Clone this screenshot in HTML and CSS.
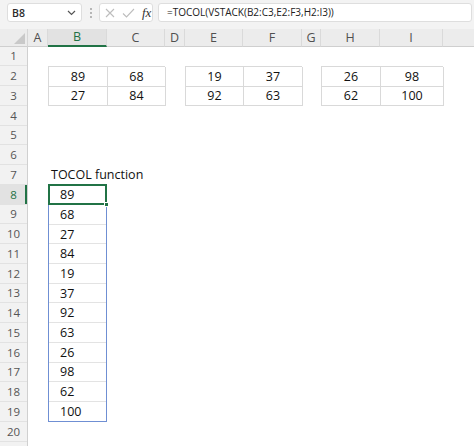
FILE: index.html
```html
<!DOCTYPE html>
<html>
<head>
<meta charset="utf-8">
<link rel="stylesheet" href="styles.css">
</head>
<body>
<div class="app">
  <div class="toolbar">
    <div class="namebox">
      <span class="ref">B8</span>
      <svg class="chev" width="9" height="6" viewBox="0 0 9 6"><polyline points="1,1 4.5,4.5 8,1" fill="none" stroke="#555" stroke-width="1.2"/></svg>
    </div>
    <svg class="grip" width="4" height="12" viewBox="0 0 4 12"><circle cx="2" cy="2" r="0.9" fill="#9a9a9a"/><circle cx="2" cy="6" r="0.9" fill="#9a9a9a"/><circle cx="2" cy="10" r="0.9" fill="#9a9a9a"/></svg>
    <div class="fnbox">
      <svg class="ico-x" width="10" height="10" viewBox="0 0 10 10"><path d="M1 1 L9 9 M9 1 L1 9" stroke="#bdbdbd" stroke-width="1.1" fill="none"/></svg>
      <svg class="ico-ok" width="13" height="10" viewBox="0 0 13 10"><polyline points="1,5.5 4.5,9 12,1" fill="none" stroke="#bdbdbd" stroke-width="1.1"/></svg>
      <span class="fx">fx</span>
    </div>
    <div class="formula">=TOCOL(VSTACK(B2:C3,E2:F3,H2:I3))</div>
  </div>

  <div class="sheet">
    <div class="corner"><svg width="11" height="11" viewBox="0 0 11 11"><polygon points="11,0 11,11 0,11" fill="#c9c9c9"/></svg></div>
    <div class="ch">A</div>
    <div class="ch sel">B</div>
    <div class="ch">C</div>
    <div class="ch">D</div>
    <div class="ch">E</div>
    <div class="ch">F</div>
    <div class="ch">G</div>
    <div class="ch">H</div>
    <div class="ch">I</div>
    <div class="ch last"></div>

    <div class="rowheads">
      <div class="rh">1</div><div class="rh">2</div><div class="rh">3</div><div class="rh">4</div>
      <div class="rh">5</div><div class="rh">6</div><div class="rh">7</div><div class="rh sel">8</div>
      <div class="rh">9</div><div class="rh">10</div><div class="rh">11</div><div class="rh">12</div>
      <div class="rh">13</div><div class="rh">14</div><div class="rh">15</div><div class="rh">16</div>
      <div class="rh">17</div><div class="rh">18</div><div class="rh">19</div><div class="rh">20</div>
      <div class="rh"></div>
    </div>

    <div class="block block-bc">
      <div class="c">89</div><div class="c">68</div>
      <div class="c">27</div><div class="c">84</div>
    </div>
    <div class="block block-ef">
      <div class="c">19</div><div class="c">37</div>
      <div class="c">92</div><div class="c">63</div>
    </div>
    <div class="block block-hi">
      <div class="c">26</div><div class="c">98</div>
      <div class="c">62</div><div class="c">100</div>
    </div>

    <div class="label">TOCOL function</div>

    <div class="spill">
      <div class="s active">89</div>
      <div class="s">68</div>
      <div class="s">27</div>
      <div class="s">84</div>
      <div class="s">19</div>
      <div class="s">37</div>
      <div class="s">92</div>
      <div class="s">63</div>
      <div class="s">26</div>
      <div class="s">98</div>
      <div class="s">62</div>
      <div class="s">100</div>
    </div>
  </div>
</div>
</body>
</html>
```

FILE: styles.css
```css
html, body {
  margin: 0;
  padding: 0;
  background: #ffffff;
  overflow: hidden;
}

.app {
  width: 474px;
  height: 446px;
  overflow: hidden;
  display: flex;
  flex-direction: column;
  font-family: "Open Sans", "Liberation Sans", sans-serif;
}

/* ---------- formula bar ---------- */
.toolbar {
  flex: none;
  height: 29px;
  box-sizing: border-box;
  padding: 3px 2px 0 7px;
  background: #f3f3f3;
  display: flex;
  align-items: flex-start;
}

.namebox {
  width: 75px;
  height: 19px;
  box-sizing: border-box;
  background: #fff;
  border: 1px solid #dedede;
  border-radius: 3px;
  display: flex;
  align-items: center;
  padding: 0 4px 0 4px;
}

.ref {
  font-size: 10.5px;
  font-weight: 600;
  color: #2b2b2b;
  flex: 1;
}

.chev { flex: none; margin-right: 1px; }

.grip {
  flex: none;
  margin: 4px 0 0 7px;
}

.fnbox {
  width: 54px;
  height: 19px;
  margin-left: 6px;
  box-sizing: border-box;
  background: #fff;
  border: 1px solid #dedede;
  border-radius: 3px;
  display: flex;
  align-items: center;
  padding-left: 5px;
}

.ico-x { flex: none; }
.ico-ok { flex: none; margin-left: 7px; }

.fx {
  margin-left: 7px;
  font-family: "Liberation Serif", serif;
  font-style: italic;
  font-size: 13px;
  color: #333;
  line-height: 1;
}

.formula {
  flex: 1;
  height: 19px;
  margin-left: 5px;
  box-sizing: border-box;
  background: #fff;
  border: 1px solid #dedede;
  border-radius: 3px;
  padding-left: 8px;
  font-size: 10px;
  line-height: 17px;
  color: #222;
  white-space: nowrap;
}

/* ---------- sheet ---------- */
.sheet {
  flex: none;
  display: grid;
  grid-template-columns: 28px 20px 59px 58px 20px 58px 59px 19px 59px 63px 31px;
  grid-template-rows: 17.5px repeat(21, 19.75px);
  background: #fff;
}

.corner {
  background: #ececec;
  border-bottom: 1px solid #cfcfcf;
  border-right: 1px solid #d6d6d6;
  box-sizing: border-box;
  display: flex;
  align-items: flex-end;
  justify-content: flex-end;
  padding: 0 2px 2px 0;
}

.ch {
  background: #ececec;
  border-bottom: 1px solid #cfcfcf;
  border-right: 1px solid #dadada;
  box-sizing: border-box;
  display: flex;
  align-items: center;
  justify-content: center;
  font-family: "Open Sans", "Liberation Sans", sans-serif;
  font-size: 12.5px;
  color: #505050;
}

.ch.sel {
  background: #e2e2e2;
  color: #1e7145;
  border-bottom: 2px solid #217346;
}

.ch.last { border-right: none; }

.rowheads {
  grid-column: 1;
  grid-row: 2 / span 21;
  display: flex;
  flex-direction: column;
  background: #f2f2f2;
  border-right: 1px solid #d0d0d0;
}

.rh {
  height: 19.75px;
  flex: none;
  box-sizing: border-box;
  border-bottom: 1px solid #e2e2e2;
  display: flex;
  align-items: center;
  justify-content: center;
  font-size: 11.5px;
  color: #555;
}

.rh.sel {
  color: #1e7145;
  background: #e2e2e2;
  box-shadow: inset -2px 0 0 #217346;
}

/* data blocks */
.block {
  grid-row: 3 / span 2;
  display: grid;
  grid-template-rows: 1fr 1fr;
  border-top: 1px solid #d9d9d9;
  border-left: 1px solid #d9d9d9;
}

.block-bc { grid-column: 3 / span 2; grid-template-columns: 59px 58px; }
.block-ef { grid-column: 6 / span 2; grid-template-columns: 58px 59px; }
.block-hi { grid-column: 9 / span 2; grid-template-columns: 59px 63px; }

.c {
  box-sizing: border-box;
  border-right: 1px solid #d9d9d9;
  border-bottom: 1px solid #d9d9d9;
  display: flex;
  align-items: center;
  justify-content: center;
  font-size: 12.5px;
  color: #111;
}

.label {
  grid-row: 8;
  grid-column: 3 / span 3;
  display: flex;
  align-items: center;
  padding-left: 3px;
  font-size: 12.5px;
  color: #111;
  white-space: nowrap;
}

.spill {
  grid-row: 9 / span 12;
  grid-column: 3;
  display: flex;
  flex-direction: column;
  border: 1px solid #6f8fd3;
  margin: -0.5px 0 0 0;
}

.s {
  flex: 1;
  box-sizing: border-box;
  border-bottom: 1px solid #e3e3e3;
  display: flex;
  align-items: center;
  padding-left: 11px;
  font-size: 12.5px;
  color: #111;
}

.s:last-child { border-bottom: none; }

.s.active {
  position: relative;
}

.s.active::after {
  content: "";
  position: absolute;
  left: -1px;
  top: -1px;
  right: -1px;
  bottom: -1px;
  border: 2px solid #217346;
}

.s.active::before {
  content: "";
  position: absolute;
  right: -3px;
  bottom: -3px;
  width: 5px;
  height: 5px;
  background: #217346;
  border: 1px solid #fff;
  box-sizing: border-box;
  z-index: 2;
}
```
